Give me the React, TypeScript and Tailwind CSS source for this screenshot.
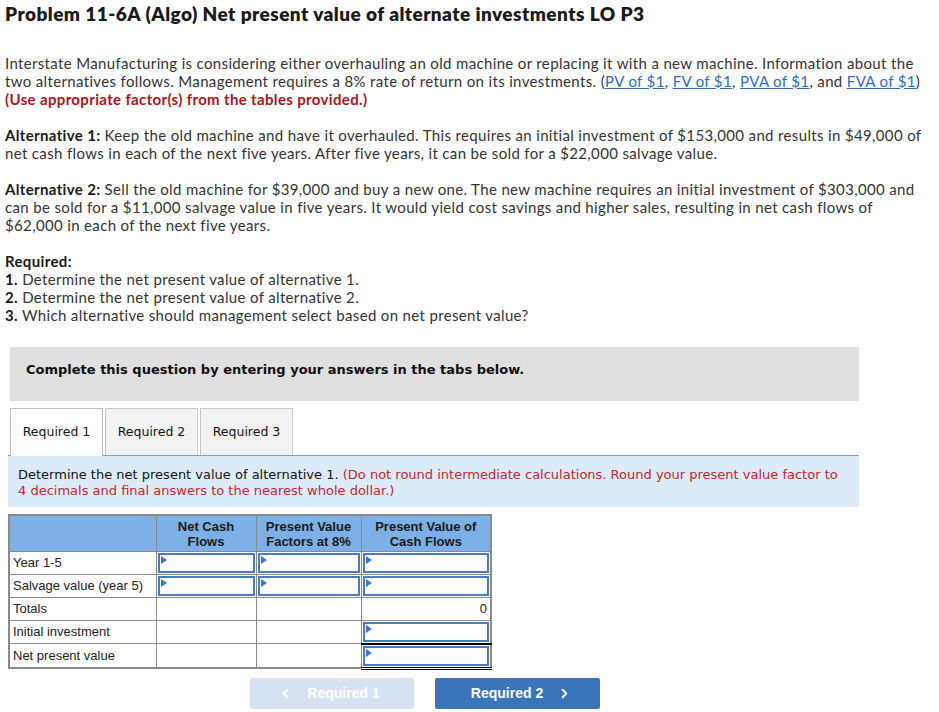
import React from "react";
import { ChevronLeft, ChevronRight } from "lucide-react";

const body = { fontFamily: "Lato, 'Open Sans', sans-serif" };
const verdana = { fontFamily: "'DejaVu Sans', Verdana, sans-serif" };
const arial = { fontFamily: "'Liberation Sans', Arial, sans-serif" };

function Flag() {
  return (
    <span className="absolute left-[1px] top-[1px] w-0 h-0 border-t-[4px] border-b-[4px] border-l-[6px] border-t-transparent border-b-transparent border-l-[#3c78c8]" />
  );
}

function InputCell({ bottom }: { bottom?: "single" | "double" }) {
  return (
    <td
      className={
        "relative p-[1px] border border-[#8a8a8a] h-[23px] " +
        (bottom === "single" ? "border-b-2 border-b-black " : "") +
        (bottom === "double" ? "border-b-[3px] border-b-black border-double " : "")
      }
    >
      <div className="relative h-[20px] border-2 border-[#4a7cbf] bg-white">
        <Flag />
      </div>
    </td>
  );
}

function Cell({ children, right }: { children?: React.ReactNode; right?: boolean }) {
  return (
    <td className={"border border-[#8a8a8a] h-[23px] px-[3px] text-[13px] leading-[15px] text-[#222] " + (right ? "text-right" : "")}>
      {children}
    </td>
  );
}

function Line({ children }: { children: React.ReactNode }) {
  return <div className="whitespace-nowrap">{children}</div>;
}

export default function App() {
  const rows = ["Year 1-5", "Salvage value (year 5)"];

  return (
    <div className="w-[939px] h-[712px] bg-white text-[#1a1a1a] overflow-hidden" style={body}>
      <div className="pl-[5px]">
        <h1 className="text-[19px] font-extrabold leading-[22px] pt-[3px] tracking-[0.45px] text-[#1a1a1a]">
          Problem 11-6A (Algo) Net present value of alternate investments LO P3
        </h1>

        <div className="text-[15px] leading-[18px] mt-[29px] tracking-[0.35px] text-[#333]">
          <div>
            <Line>
              Interstate Manufacturing is considering either overhauling an old machine or replacing it with a new machine. Information about the
            </Line>
            <Line>
              two alternatives follows. Management requires a 8% rate of return on its investments. (
              <span className="text-[#2f6dbd] underline">PV of $1</span>,{" "}
              <span className="text-[#2f6dbd] underline">FV of $1</span>,{" "}
              <span className="text-[#2f6dbd] underline">PVA of $1</span>, and{" "}
              <span className="text-[#2f6dbd] underline">FVA of $1</span>)
            </Line>
            <Line>
              <span className="font-bold text-[#b0121b]">(Use appropriate factor(s) from the tables provided.)</span>
            </Line>
          </div>

          <div className="mt-[18px]">
            <Line>
              <b className="text-[#1a1a1a]">Alternative 1:</b> Keep the old machine and have it overhauled. This requires an initial investment of $153,000 and results in $49,000 of
            </Line>
            <Line>net cash flows in each of the next five years. After five years, it can be sold for a $22,000 salvage value.</Line>
          </div>

          <div className="mt-[18px]">
            <Line>
              <b className="text-[#1a1a1a]">Alternative 2:</b> Sell the old machine for $39,000 and buy a new one. The new machine requires an initial investment of $303,000 and
            </Line>
            <Line>
              can be sold for a $11,000 salvage value in five years. It would yield cost savings and higher sales, resulting in net cash flows of
            </Line>
            <Line>$62,000 in each of the next five years.</Line>
          </div>

          <div className="mt-[18px]">
            <b className="text-[#1a1a1a]">Required:</b>
            <div><b className="text-[#1a1a1a]">1.</b> Determine the net present value of alternative 1.</div>
            <div><b className="text-[#1a1a1a]">2.</b> Determine the net present value of alternative 2.</div>
            <div><b className="text-[#1a1a1a]">3.</b> Which alternative should management select based on net present value?</div>
          </div>
        </div>
      </div>

      <div className="mt-[23px] ml-[10px] w-[849px] h-[54px] bg-[#e0e0e0] flex items-center pl-[16px] pb-[8px]" style={verdana}>
        <span className="text-[13px] font-bold text-[#111]">Complete this question by entering your answers in the tabs below.</span>
      </div>

      <div className="ml-[8px] w-[851px] mt-[7px]" style={verdana}>
        <div className="flex gap-[2px] pl-[2px] items-end">
          <div className="w-[93px] h-[48px] bg-white border border-[#bdbdbd] border-b-0 flex items-center justify-center text-[12.5px] text-[#111] -mb-[1px] relative z-10">
            Required 1
          </div>
          <div className="w-[93px] h-[47px] bg-[#f2f2f2] border border-[#c8c8c8] border-b-0 flex items-center justify-center text-[12.5px] text-[#111]">
            Required 2
          </div>
          <div className="w-[93px] h-[47px] bg-[#f2f2f2] border border-[#c8c8c8] border-b-0 flex items-center justify-center text-[12.5px] text-[#111]">
            Required 3
          </div>
        </div>
        <div className="border-t border-[#9a9a9a] bg-[#dcebf8] px-[10px] pt-[11px] pb-[7px] text-[13px] leading-[16px] text-[#111] h-[52px]">
          Determine the net present value of alternative 1.{" "}
          <span className="text-[#c0262d]">
            (Do not round intermediate calculations. Round your present value factor to 4 decimals and final answers to the nearest whole dollar.)
          </span>
        </div>
      </div>

      <div className="ml-[8px] mt-[7px]" style={arial}>
        <table className="border-collapse border-2 border-[#8a8a8a]">
          <colgroup>
            <col className="w-[147px]" />
            <col className="w-[100px]" />
            <col className="w-[105px]" />
            <col className="w-[130px]" />
          </colgroup>
          <thead>
            <tr className="bg-[#7cb0e6] h-[36px]">
              <th className="border border-[#8a8a8a]" />
              <th className="border border-[#8a8a8a] text-[13px] font-bold leading-[15px] text-[#1a1a1a] align-top pt-[3px]">
                Net Cash
                <br />
                Flows
              </th>
              <th className="border border-[#8a8a8a] text-[13px] font-bold leading-[15px] text-[#1a1a1a] align-top pt-[3px]">
                Present Value
                <br />
                Factors at 8%
              </th>
              <th className="border border-[#8a8a8a] text-[13px] font-bold leading-[15px] text-[#1a1a1a] align-top pt-[3px]">
                Present Value of
                <br />
                Cash Flows
              </th>
            </tr>
          </thead>
          <tbody>
            {rows.map((label) => (
              <tr key={label}>
                <Cell>{label}</Cell>
                <InputCell />
                <InputCell />
                <InputCell />
              </tr>
            ))}
            <tr>
              <Cell>Totals</Cell>
              <Cell />
              <Cell />
              <Cell right>0</Cell>
            </tr>
            <tr>
              <Cell>Initial investment</Cell>
              <Cell />
              <Cell />
              <InputCell bottom="single" />
            </tr>
            <tr>
              <Cell>Net present value</Cell>
              <Cell />
              <Cell />
              <InputCell bottom="double" />
            </tr>
          </tbody>
        </table>
      </div>

      <div className="flex gap-[21px] ml-[250px] mt-[8px]" style={arial}>
        <div className="w-[164px] h-[31px] rounded-[2px] bg-[#d6e2f0] flex items-center justify-center gap-[14px] text-white text-[14px] font-bold pr-[6px]">
          <ChevronLeft size={15} strokeWidth={3} />
          <span>Required 1</span>
        </div>
        <div className="w-[165px] h-[31px] rounded-[2px] bg-[#3a75b9] flex items-center justify-center gap-[14px] text-white text-[14px] font-bold pl-[8px]">
          <span>Required 2</span>
          <ChevronRight size={15} strokeWidth={3} />
        </div>
      </div>
    </div>
  );
}
